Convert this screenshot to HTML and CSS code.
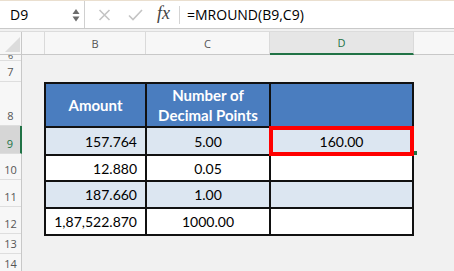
FILE: index.html
```html
<!DOCTYPE html>
<html>
  <head>
    <meta charset="utf-8">
    <link rel="stylesheet" href="styles.css">
  </head>
  <body>
    <div class="formula-bar">
      <div class="name-box">
        <span class="name-text">D9</span>
        <span class="spinner">
          <svg width="8" height="16" viewBox="0 0 8 16">
            <path d="M4 2 L7.5 7 L0.5 7 Z" fill="#6b6b6b"/>
            <path d="M0.5 9.5 L7.5 9.5 L4 14.5 Z" fill="#6b6b6b"/>
          </svg>
        </span>
      </div>
      <div class="fb-tools">
        <svg class="fb-icon" width="13" height="12" viewBox="0 0 13 12">
          <path d="M1.5 1 L11.5 11 M11.5 1 L1.5 11" stroke="#c4c4c4" stroke-width="1.6" fill="none"/>
        </svg>
        <svg class="fb-icon" width="15" height="12" viewBox="0 0 15 12">
          <path d="M1 6.5 L5 10.5 L14 1" stroke="#c4c4c4" stroke-width="1.6" fill="none"/>
        </svg>
        <span class="fx">fx</span>
        <span class="fb-sep"></span>
      </div>
      <div class="formula">=MROUND(B9,C9)</div>
    </div>

    <div class="col-heads">
      <div class="corner">
        <svg width="22" height="22" viewBox="0 0 22 22">
          <path d="M20 5 L20 20 L5 20 Z" fill="#dcdcdc"/>
        </svg>
      </div>
      <div class="col-head col-a"></div>
      <div class="col-head col-b">B</div>
      <div class="col-head col-c">C</div>
      <div class="col-head col-d active">D</div>
      <div class="col-head col-rest"></div>
    </div>

    <div class="sheet">
      <div class="row-heads">
        <div class="rh r6"><span class="rh-cut">6</span></div>
        <div class="rh r7">7</div>
        <div class="rh r8">8</div>
        <div class="rh r9 active">9</div>
        <div class="rh r10">10</div>
        <div class="rh r11">11</div>
        <div class="rh r12">12</div>
        <div class="rh r13">13</div>
        <div class="rh r14">14</div>
      </div>

      <div class="cells">
        <table class="data">
          <tbody>
            <tr class="head">
              <td class="c-b">Amount</td>
              <td class="c-c">Number of<br>Decimal Points</td>
              <td class="c-d"></td>
            </tr>
            <tr class="band r9">
              <td class="c-b num">157.764</td>
              <td class="c-c">5.00</td>
              <td class="c-d selected">160.00</td>
            </tr>
            <tr class="r10">
              <td class="c-b num">12.880</td>
              <td class="c-c">0.05</td>
              <td class="c-d"></td>
            </tr>
            <tr class="band r11">
              <td class="c-b num">187.660</td>
              <td class="c-c">1.00</td>
              <td class="c-d"></td>
            </tr>
            <tr class="r12">
              <td class="c-b num">1,87,522.870</td>
              <td class="c-c">1000.00</td>
              <td class="c-d"></td>
            </tr>
          </tbody>
        </table>
      </div>
    </div>
  </body>
</html>
```

FILE: styles.css
```css
html,
body {
  margin: 0;
  padding: 0;
}

body {
  background-color: #f1f1f1;
  font-family: Lato, "Open Sans", sans-serif;
  color: #000;
  overflow: hidden;
}

/* formula bar */

.formula-bar {
  display: flex;
  align-items: stretch;
  height: 27px;
  background-color: #fff;
  border-top: 1px solid #eadfcf;
  border-bottom: 1px solid #c9c9c9;
}

.name-box {
  display: flex;
  align-items: center;
  justify-content: space-between;
  width: 85px;
  padding-left: 10px;
  padding-right: 4px;
  box-sizing: border-box;
  border-right: 1px solid #d0d0d0;
}

.name-text {
  font-family: "Open Sans", sans-serif;
  font-size: 14px;
}

.spinner {
  display: flex;
  align-items: center;
}

.fb-tools {
  display: flex;
  align-items: center;
  padding-left: 13px;
}

.fb-icon {
  margin-right: 17px;
}

.fb-icon + .fb-icon {
  margin-right: 14px;
}

.fx {
  font-family: "Liberation Serif", serif;
  font-style: italic;
  font-size: 18px;
  color: #444;
  margin-top: -2px;
}

.fb-sep {
  width: 1px;
  height: 18px;
  background-color: #d4d4d4;
  margin-left: 9px;
}

.formula {
  display: flex;
  align-items: center;
  padding-left: 7px;
  font-family: "Open Sans", sans-serif;
  font-size: 14px;
}

/* column headers */

.col-heads {
  display: flex;
  height: 22px;
  margin-top: 2px;
  background-color: #f7f7f7;
  border-top: 1px solid #dcdcdc;
  border-bottom: 1px solid #c8c8c8;
  font-family: "Open Sans", sans-serif;
  font-size: 11px;
  color: #555;
}

.corner {
  width: 22px;
  border-right: 1px solid #c8c8c8;
  box-sizing: border-box;
}

.corner svg {
  display: block;
}

.col-head {
  display: flex;
  align-items: center;
  justify-content: center;
  border-right: 1px solid #dadada;
  box-sizing: border-box;
}

.col-a { width: 23px; }
.col-b { width: 101px; }
.col-c { width: 124px; }
.col-d { width: 144px; }

.col-rest {
  flex: 1;
  border-right: none;
}

.col-head.active {
  background-color: #e6e6e6;
  color: #217346;
  border-bottom: 2px solid #217346;
  margin-bottom: -1px;
}

/* sheet body */

.sheet {
  display: flex;
}

.row-heads {
  width: 22px;
  background-color: #f7f7f7;
  border-right: 1px solid #c8c8c8;
  box-sizing: border-box;
  font-family: "Open Sans", sans-serif;
  font-size: 11px;
  color: #555;
}

.rh {
  display: flex;
  align-items: flex-end;
  justify-content: center;
  box-sizing: border-box;
  border-bottom: 1px solid #dedede;
  padding-bottom: 2px;
  line-height: 14px;
  overflow: hidden;
}

.r6 { height: 6px; padding-bottom: 0; }
.r7 { height: 21px; }
.r8 { height: 44px; }
.r9 { height: 28px; }
.r10 { height: 26px; }
.r11 { height: 27px; }
.r12 { height: 27px; }
.r13 { height: 20px; }
.r14 { height: 20px; }

.rh-cut {
  line-height: 8px;
  font-size: 9px;
}

.rh.active {
  background-color: #d6d6d6;
  color: #217346;
  border-right: 2px solid #217346;
  margin-right: -1px;
}

.cells {
  flex: 1;
  padding-top: 27px;
  padding-left: 22px;
}

/* table */

.data {
  border-collapse: collapse;
  font-size: 14px;
}

.data td {
  border: 2px solid #111;
  padding: 0 8px;
  text-align: center;
  background-color: #fff;
  box-sizing: border-box;
}

.data .c-b { width: 101px; }
.data .c-c { width: 124px; }
.data .c-d { width: 143px; }

.data td.num {
  text-align: right;
}

.data tr.head td {
  height: 44px;
  background-color: #4a7dbf;
  color: #fff;
  font-size: 15px;
  font-weight: bold;
  line-height: 20px;
}

.data tr.band td {
  background-color: #dce6f1;
}

.data td.selected {
  position: relative;
  outline: 4px solid #f00;
  outline-offset: -3px;
}

.data td.selected::after {
  content: "";
  position: absolute;
  right: -5px;
  bottom: -1px;
  width: 3px;
  height: 4px;
  background-color: #217346;
}
```
